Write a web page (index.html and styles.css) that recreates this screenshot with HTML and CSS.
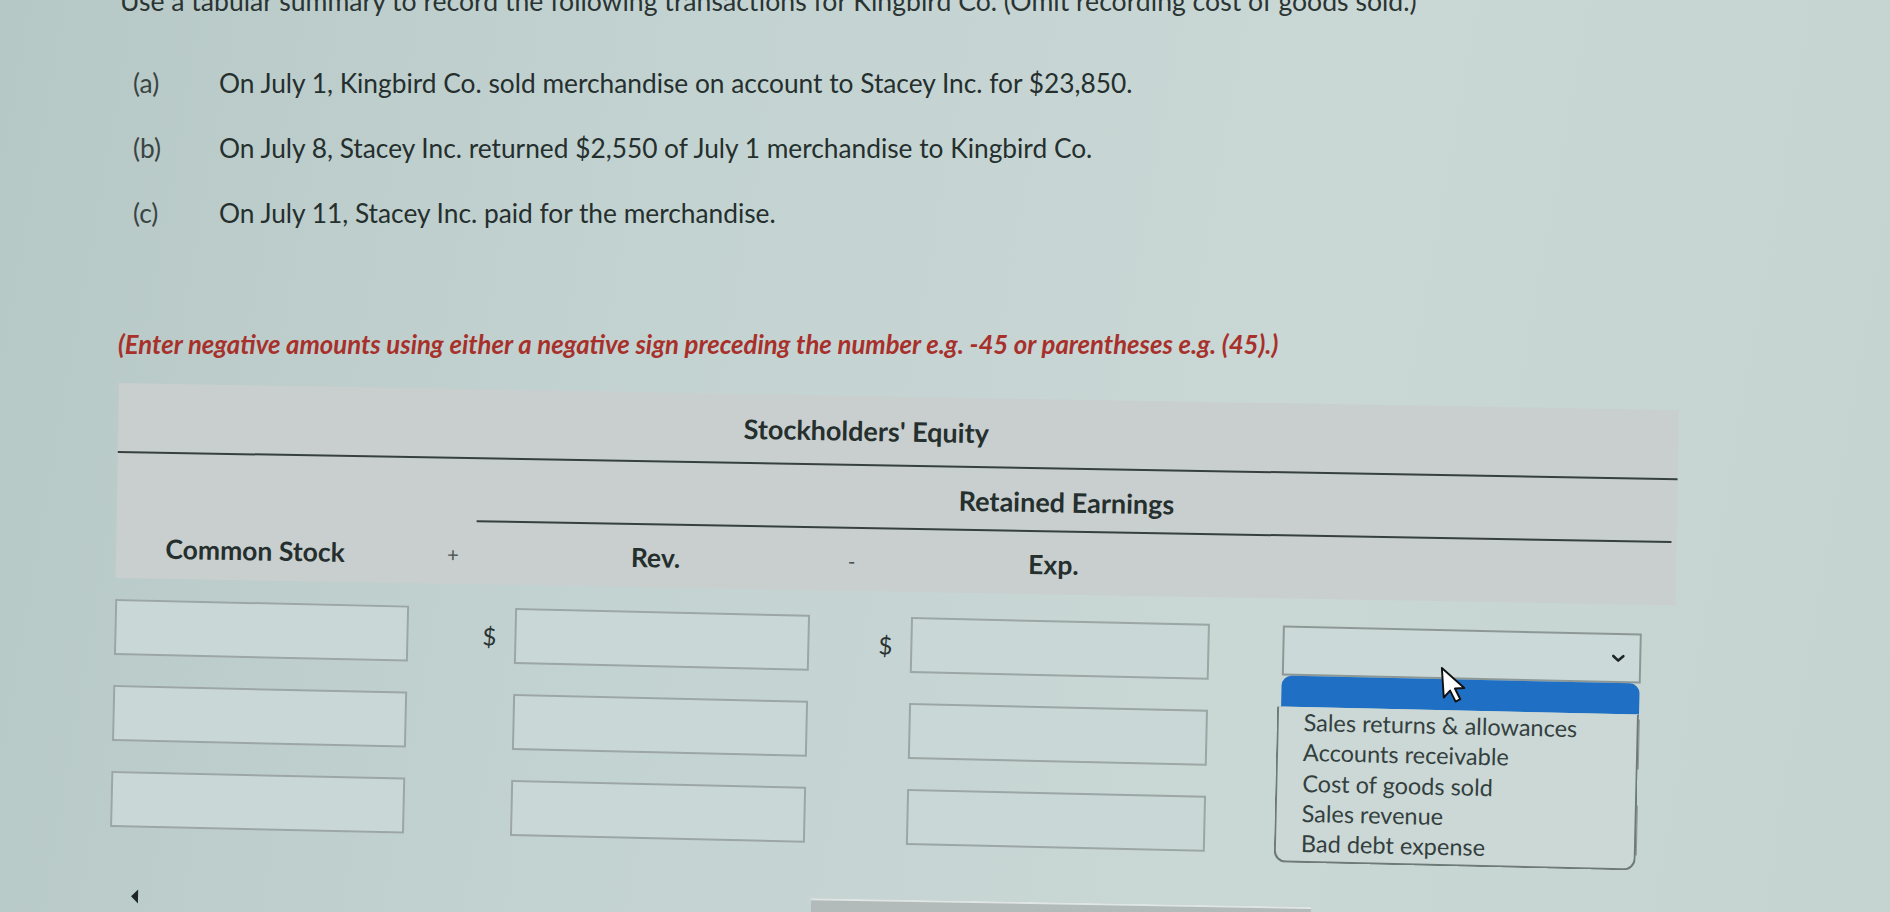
FILE: index.html
```html
<!DOCTYPE html>
<html lang="en">
<head>
<meta charset="utf-8">
<title>Tabular summary</title>
<link rel="stylesheet" href="styles.css">
</head>
<body>
<div class="page">
  <p class="intro">Use a tabular summary to record the following transactions for Kingbird Co. (Omit recording cost of goods sold.)</p>
  <ol class="items">
    <li><span class="lbl">(a)</span><span>On July 1, Kingbird Co. sold merchandise on account to Stacey Inc. for $23,850.</span></li>
    <li><span class="lbl">(b)</span><span>On July 8, Stacey Inc. returned $2,550 of July 1 merchandise to Kingbird Co.</span></li>
    <li><span class="lbl">(c)</span><span>On July 11, Stacey Inc. paid for the merchandise.</span></li>
  </ol>
  <p class="note">(Enter negative amounts using either a negative sign preceding the number e.g. -45 or parentheses e.g. (45).)</p>

  <div class="sheet">
    <div class="band">
      <div class="se">Stockholders' Equity</div>
      <div class="re">Retained Earnings</div>
      <div class="grid labels">
        <div class="lab">Common Stock</div>
        <div class="op">+</div>
        <div class="lab">Rev.</div>
        <div class="op">-</div>
        <div class="lab">Exp.</div>
        <div></div>
        <div></div>
      </div>
    </div>

    <div class="rows">
      <div class="grid row">
        <div class="box"></div>
        <div class="cur">$</div>
        <div class="box"></div>
        <div class="cur">$</div>
        <div class="box"></div>
        <div></div>
        <div class="selcell">
          <div class="select open">
            <svg class="chev" width="14" height="9" viewBox="0 0 14 9"><path d="M2 2 L7 6.5 L12 2" fill="none" stroke="#1e2625" stroke-width="2.6" stroke-linecap="round" stroke-linejoin="round"/></svg>
          </div>
          <div class="dropdown">
            <div class="hl"></div>
            <ul class="opts">
              <li>Sales returns &amp; allowances</li>
              <li>Accounts receivable</li>
              <li>Cost of goods sold</li>
              <li>Sales revenue</li>
              <li>Bad debt expense</li>
            </ul>
          </div>
          <svg class="cursor" width="29" height="41" viewBox="0 0 24 34"><path d="M2 1.5 L2 26 L7.6 20.6 L11.6 30 L15.6 28.3 L11.7 19.2 L19.5 19.2 Z" fill="#ffffff" stroke="#111" stroke-width="1.6" stroke-linejoin="round"/></svg>
        </div>
      </div>
      <div class="grid row">
        <div class="box"></div>
        <div></div>
        <div class="box"></div>
        <div></div>
        <div class="box"></div>
        <div></div>
        <div class="selcell"><div class="select"></div></div>
      </div>
      <div class="grid row">
        <div class="box"></div>
        <div></div>
        <div class="box"></div>
        <div></div>
        <div class="box"></div>
        <div></div>
        <div class="selcell"><div class="select"></div></div>
      </div>
    </div>

    <div class="scrollbar">
      <span class="arrow"></span>
      <span class="thumb"></span>
    </div>
  </div>
</div>
</body>
</html>
```

FILE: styles.css
```css
html, body {
  margin: 0;
  padding: 0;
  height: 100%;
  overflow: hidden;
}
body {
  background: linear-gradient(100deg, #b6c8c6 0%, #c3d3d1 35%, #c9d7d5 65%, #c5d3d1 100%);
  font-family: Lato, "Open Sans", sans-serif;
  color: #252f2e;
}
.page {
  position: relative;
  width: 1890px;
  height: 912px;
}
.intro {
  margin: -14px 0 0 120px;
  font-size: 26.6px;
  line-height: 30px;
  white-space: nowrap;
  color: #2a3433;
}
.items {
  list-style: none;
  margin: 52px 0 0 133px;
  padding: 0;
}
.items li {
  display: flex;
  font-size: 26.3px;
  line-height: 30px;
  margin-bottom: 35px;
  white-space: nowrap;
}
.items li:last-child { margin-bottom: 0; }
.lbl {
  width: 86px;
  flex: none;
  color: #3a4443;
}
.note {
  margin: 101px 0 0 118px;
  font-size: 25.7px;
  line-height: 30px;
  font-weight: 700;
  font-style: italic;
  color: #a8302b;
  white-space: nowrap;
}
.sheet {
  margin: 24px 0 0 119px;
  width: 1560px;
  transform: rotate(1deg);
  transform-origin: 0 0;
}
.band {
  background: #c9cfce;
  padding-bottom: 15px;
}
.se {
  text-align: center;
  font-weight: 700;
  font-size: 27px;
  line-height: 30px;
  padding: 20px 64px 18px 0;
  border-bottom: 2px solid #36403f;
}
.re {
  margin: 0 5px 0 360px;
  text-align: center;
  font-weight: 700;
  font-size: 27px;
  line-height: 30px;
  padding: 18px 16px 13px 0;
  border-bottom: 2px solid #36403f;
}
.grid {
  display: grid;
  grid-template-columns: 294px 106px 295px 101px 299px 73px 359px;
}
.labels {
  padding-top: 17px;
  font-size: 26.5px;
  line-height: 30px;
}
.lab {
  text-align: center;
  font-weight: 700;
  padding-right: 16px;
}
.op {
  text-align: center;
  padding-right: 20px;
  font-size: 20px;
  color: #4a5453;
}
.rows {
  margin-top: 21px;
  display: flex;
  flex-direction: column;
  gap: 30px;
  transform: rotate(0.3deg);
  transform-origin: 0 0;
}
.row {
  height: 56px;
}
.box {
  border: 2px solid #9ba6a5;
  background: #c9d8d6;
}
.cur {
  align-self: center;
  text-align: right;
  padding-right: 18px;
  font-size: 24px;
  color: #2a3433;
}
.selcell {
  position: relative;
  align-self: start;
  height: 50px;
}
.select {
  height: 100%;
  box-sizing: border-box;
  border: 2px solid #8d9896;
  background: #cbdad8;
  display: flex;
  align-items: center;
  justify-content: flex-end;
  padding-right: 14px;
}
.chev { display: block; }
.dropdown {
  position: absolute;
  left: -4px;
  top: 100%;
  width: 362px;
  z-index: 2;
}
.hl {
  height: 31px;
  margin-left: 4px;
  background: #1f6fc4;
  border-radius: 10px 10px 0 0;
}
.opts {
  list-style: none;
  margin: 0;
  padding: 0 0 3px 25px;
  background: #cbd8d6;
  border: 2px solid #6e7a79;
  border-top: none;
  border-radius: 0 0 12px 12px;
  font-size: 23.5px;
  line-height: 30.3px;
  color: #34403e;
}
.cursor {
  position: absolute;
  left: 159px;
  top: 36px;
  z-index: 3;
  transform: rotate(-5deg);
}
.scrollbar {
  margin-top: 53px;
  display: flex;
  align-items: flex-start;
  height: 20px;
}
.arrow {
  margin: 9px 0 0 21px;
  width: 0;
  height: 0;
  border-top: 7px solid transparent;
  border-bottom: 7px solid transparent;
  border-right: 7px solid #1f2726;
}
.thumb {
  margin: 6px 0 0 673px;
  width: 500px;
  height: 16px;
  background: #b3bbba;
  border-top: 2px solid #dfe5e4;
}
```
